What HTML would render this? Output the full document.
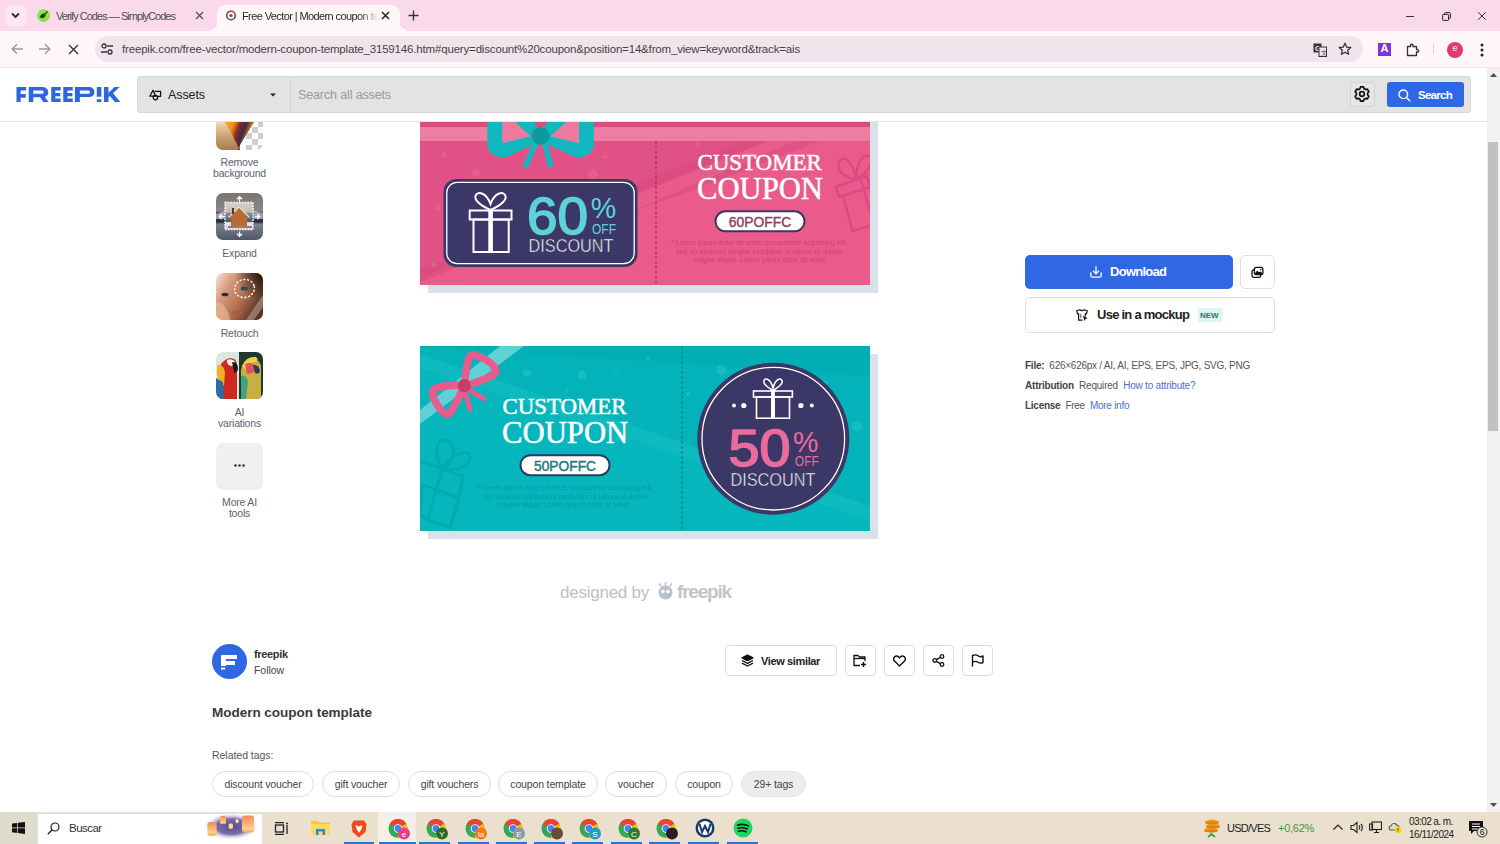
<!DOCTYPE html>
<html><head><meta charset="utf-8">
<style>
*{box-sizing:border-box;margin:0;padding:0}
html,body{width:1500px;height:844px;overflow:hidden;background:#fff;font-family:"Liberation Sans",sans-serif;color:#222}
.a{position:absolute;white-space:nowrap}
#tabs{position:absolute;left:0;top:0;width:1500px;height:31px;background:#fadaea}
#toolbar{position:absolute;left:0;top:31px;width:1500px;height:37px;background:#fff7f7;border-bottom:1px solid #f3e3ea}
#page{position:absolute;left:0;top:68px;width:1500px;height:744px;background:#fff;overflow:hidden}
#taskbar{position:absolute;left:0;top:812px;width:1500px;height:32px;background:#ebdfcd}
.side{position:absolute;left:216px;width:47px;height:47px;border-radius:7px;overflow:hidden}
.slab{position:absolute;left:199px;width:81px;text-align:center;font-size:10.5px;line-height:11px;color:#5b6270;letter-spacing:-0.2px}
.ib{position:absolute;width:31px;height:31px;border:1px solid #dcdcdc;border-radius:4px;background:#fff}
.tag{position:absolute;top:703px;height:26px;border:1px solid #dedede;border-radius:13px;font-size:10.5px;letter-spacing:-0.15px;color:#444;text-align:center;line-height:24px}
.tb{position:absolute;top:0;height:32px}
.ul{position:absolute;height:2px;background:#2a72d6}
</style></head><body>
<div id="tabs">
  <div class="a" style="left:5px;top:5px;width:22px;height:22px;border-radius:6px;background:#fce7f1"></div>
  <svg class="a" style="left:10px;top:12px" width="11" height="8" viewBox="0 0 11 8"><path d="M2 1.5 L5.5 5 L9 1.5" stroke="#2a2a2a" stroke-width="1.8" fill="none"/></svg>
  <div class="a" style="left:37px;top:9px;width:13px;height:13px;border-radius:50%;background:#8ee24c"></div>
  <svg class="a" style="left:37px;top:9px" width="13" height="13" viewBox="0 0 13 13"><path d="M3.5 8 Q5 4.5 7.5 5.5 Q9 7 5.5 8.5 Z M7 6 L10.5 2.5" stroke="#1a4a10" stroke-width="1.4" fill="#1a4a10"/></svg>
  <div id="t1" class="a" style="left:56px;top:10px;font-size:11px;color:#4d4d4d;letter-spacing:-0.973px">Verify Codes — SimplyCodes</div>
  <svg class="a" style="left:195px;top:11px" width="9" height="9" viewBox="0 0 9 9"><path d="M1 1L8 8M8 1L1 8" stroke="#555" stroke-width="1.3"/></svg>
  <div class="a" style="left:217px;top:5px;width:183px;height:27px;background:#fff7f7;border-radius:9px 9px 0 0"></div>
  <div class="a" style="left:211px;top:23px;width:6px;height:8px;background:radial-gradient(circle at 0 0,#fadaea 6px,#fff7f7 6.5px)"></div>
  <div class="a" style="left:400px;top:23px;width:6px;height:8px;background:radial-gradient(circle at 100% 0,#fadaea 6px,#fff7f7 6.5px)"></div>
  <svg class="a" style="left:225px;top:9px" width="12" height="12" viewBox="0 0 12 12"><circle cx="6" cy="6.5" r="4.3" stroke="#555" stroke-width="1.6" fill="none"/><path d="M6 2.2 A4.3 4.3 0 0 1 10.3 6.5" stroke="#e0506a" stroke-width="1.6" fill="none"/><circle cx="6" cy="6.5" r="1.6" fill="#555"/></svg>
  <div id="t2" class="a" style="left:242px;top:10px;font-size:11px;color:#2b2b2b;letter-spacing:-0.6px;width:136px;overflow:hidden;-webkit-mask-image:linear-gradient(90deg,#000 118px,transparent 136px)">Free Vector | Modern coupon template</div>
  <svg class="a" style="left:381px;top:11px" width="9" height="9" viewBox="0 0 9 9"><path d="M1 1L8 8M8 1L1 8" stroke="#222" stroke-width="1.5"/></svg>
  <svg class="a" style="left:408px;top:10px" width="11" height="11" viewBox="0 0 11 11"><path d="M5.5 0.5V10.5M0.5 5.5H10.5" stroke="#333" stroke-width="1.4"/></svg>
  <div class="a" style="left:1406px;top:15.5px;width:8px;height:1px;background:#333"></div>
  <svg class="a" style="left:1442px;top:11.5px" width="9" height="9" viewBox="0 0 9 9"><rect x="0.6" y="2.4" width="6" height="6" rx="0.8" stroke="#222" stroke-width="1" fill="none"/><path d="M2.4 2.2V1.6Q2.4 0.6 3.4 0.6H7.4Q8.4 0.6 8.4 1.6V5.6Q8.4 6.6 7.4 6.6H6.8" stroke="#222" stroke-width="1" fill="none"/></svg>
  <svg class="a" style="left:1478px;top:12px" width="8" height="8" viewBox="0 0 8 8"><path d="M0.3 0.3L7.7 7.7M7.7 0.3L0.3 7.7" stroke="#333" stroke-width="1"/></svg>
</div>
<div id="toolbar">
  <svg class="a" style="left:11px;top:12px" width="13" height="12" viewBox="0 0 13 12"><path d="M12 6H1.5M6 1.2L1.2 6L6 10.8" stroke="#9a9a9a" stroke-width="1.4" fill="none"/></svg>
  <svg class="a" style="left:38px;top:12px" width="13" height="12" viewBox="0 0 13 12"><path d="M1 6H11.5M7 1.2L11.8 6L7 10.8" stroke="#9a9a9a" stroke-width="1.4" fill="none"/></svg>
  <svg class="a" style="left:68px;top:13px" width="11" height="11" viewBox="0 0 11 11"><path d="M1 1L10 10M10 1L1 10" stroke="#333" stroke-width="1.4"/></svg>
  <div class="a" style="left:95px;top:5px;width:1268px;height:26px;background:#f2e4ec;border-radius:13px"></div>
  <svg class="a" style="left:100px;top:11px" width="14" height="14" viewBox="0 0 14 14"><circle cx="4" cy="4" r="2" stroke="#333" stroke-width="1.3" fill="none"/><path d="M7 4H13M1 10H7" stroke="#333" stroke-width="1.3"/><circle cx="10" cy="10" r="2" stroke="#333" stroke-width="1.3" fill="none"/></svg>
  <div id="url" class="a" style="left:122px;top:12px;font-size:11.5px;color:#444;letter-spacing:-0.17px">freepik.com/free-vector/modern-coupon-template_3159146.htm#query=discount%20coupon&amp;position=14&amp;from_view=keyword&amp;track=ais</div>
  <svg class="a" style="left:1313px;top:12px" width="14" height="14" viewBox="0 0 14 14"><rect x="0.5" y="0.5" width="8" height="9" fill="#333"/><text x="2" y="8" font-size="7" fill="#fff" font-family="Liberation Sans" font-weight="bold">G</text><rect x="6" y="4" width="7.5" height="9.5" stroke="#333" stroke-width="1" fill="#f2e4ec"/><text x="7.5" y="11.5" font-size="6" fill="#333" font-family="Liberation Sans">文</text></svg>
  <svg class="a" style="left:1338px;top:11px" width="14" height="14" viewBox="0 0 14 14"><path d="M7 1.3L8.7 5.1L12.8 5.5L9.7 8.2L10.6 12.3L7 10.2L3.4 12.3L4.3 8.2L1.2 5.5L5.3 5.1Z" stroke="#333" stroke-width="1.3" fill="none" stroke-linejoin="round"/></svg>
  <div class="a" style="left:1378px;top:12px;width:13px;height:13px;background:#7b33e0"></div>
  <div class="a" style="left:1378px;top:11px;width:13px;font-size:11px;font-weight:bold;color:#fff;text-align:center">A</div>
  <svg class="a" style="left:1406px;top:12px" width="14" height="14" viewBox="0 0 14 14"><path d="M1.5 3.5H4.5V2.2A1.3 1.3 0 0 1 7 2.2V3.5H10.5V6.5H11.8A1.3 1.3 0 0 1 11.8 9H10.5V12.5H1.5Z" stroke="#333" stroke-width="1.3" fill="none" stroke-linejoin="round"/></svg>
  <div class="a" style="left:1433px;top:13px;width:1px;height:10px;background:#f0c8d8"></div>
  <div class="a" style="left:1447px;top:11px;width:16px;height:16px;border-radius:50%;background:#e23a6a"></div>
  <div class="a" style="left:1447px;top:12px;width:16px;font-size:9px;color:#fff;text-align:center">e</div>
  <svg class="a" style="left:1480px;top:12px" width="4" height="14" viewBox="0 0 4 14"><circle cx="2" cy="2" r="1.5" fill="#222"/><circle cx="2" cy="7" r="1.5" fill="#222"/><circle cx="2" cy="12" r="1.5" fill="#222"/></svg>
</div>
<div id="page">
  <!-- coupon pink -->
  <svg class="a" style="left:420px;top:32px" width="458" height="193" viewBox="0 0 458 193">
    <rect x="8" y="8" width="450" height="185" fill="#dae1ea"/>
    <rect x="0" y="0" width="450" height="185" fill="#ea5a8a"/>
    <polygon points="0,0 450,0 450,22 260,95 0,185" fill="#e05285"/>
    <polygon points="0,178 0,185 40,185 420,22 395,22" fill="#e95c8c" opacity="0.9"/>
    <polygon points="0,170 0,182 395,22 370,22" fill="#d84a7e" opacity="0.6"/>
    <rect x="0" y="0" width="450" height="27" fill="#d84d7e"/>
    <rect x="0" y="27" width="450" height="14" fill="#ee7ca3"/>
    <g fill="#e26392" opacity="0.8"><circle cx="24" cy="55" r="2.5"/><circle cx="56" cy="73" r="4"/><circle cx="173" cy="75" r="5"/><circle cx="185" cy="57" r="2"/><circle cx="18" cy="107" r="3.5"/><circle cx="14" cy="165" r="2.5"/><circle cx="278" cy="44" r="2"/></g>
    <!-- bow -->
    <g stroke="#12b8c0" stroke-width="5.6" stroke-linecap="round"><path d="M115.4 44 L106 65"/><path d="M125 44 L130.4 65"/></g>
    <g fill="#12b8c0" stroke="#12b8c0" stroke-width="4" stroke-linejoin="round">
      <path d="M116 30 L111 20 L69.3 20 L69.3 44 Q70 55 85.5 55.3 L116 41Z"/>
      <path d="M125.2 30 L130.2 20 L171.9 20 L171.9 44 Q171.2 55 155.7 55.3 L125.2 41Z"/>
    </g>
    <g fill="#ef7aa0">
      <path d="M82.2 20 L93 20 L110.7 36.2 L82.2 43.2Z"/>
      <path d="M159 20 L148.2 20 L130.5 36.2 L159 43.2Z"/>
    </g>
    <circle cx="120.6" cy="35.8" r="9" fill="#0c9a9e"/>
    <!-- navy box -->
    <rect x="23.5" y="79" width="194" height="88" rx="13" fill="#3b3766"/>
    <rect x="26.8" y="82.3" width="187.4" height="81.4" rx="10.5" fill="none" stroke="#fff" stroke-width="1.3"/>
    <g fill="none" stroke="#fff" stroke-width="2">
      <rect x="49.7" y="110.5" width="41.8" height="9"/>
      <rect x="53.5" y="119.5" width="35.2" height="32.5"/>
      <path d="M70.5 110 C62 106 54 101 55.5 96 C57 91 66 91.5 70.5 104 C75 91.5 84 91 85.5 96 C87 101 79 106 70.5 110Z"/>
    </g>
    <rect x="68.3" y="110" width="4.6" height="42" fill="#fff"/>
    <text x="107" y="134.4" font-family="Liberation Sans" font-size="52" fill="#5dd3d6" stroke="#5dd3d6" stroke-width="1.6" textLength="61" lengthAdjust="spacingAndGlyphs">60</text>
    <text x="170.8" y="118" font-family="Liberation Sans" font-size="30" fill="#5dd3d6" textLength="25.5" lengthAdjust="spacingAndGlyphs">%</text>
    <text x="172" y="134.4" font-family="Liberation Sans" font-size="14.4" fill="#5dd3d6" textLength="24" lengthAdjust="spacingAndGlyphs">OFF</text>
    <text x="108.5" y="152" font-family="Liberation Sans" font-size="18.5" fill="#fff" stroke="#3b3766" stroke-width="0.5" textLength="85" lengthAdjust="spacingAndGlyphs">DISCOUNT</text>
    <line x1="236" y1="41" x2="236" y2="185" stroke="#a8386a" stroke-width="1.3" stroke-dasharray="3 2"/>
    <!-- right -->
    <clipPath id="cp1"><rect width="450" height="185"/></clipPath>
    <g fill="none" stroke="#d94b7f" stroke-width="2.6" stroke-linejoin="round" opacity="0.9" clip-path="url(#cp1)">
      <path d="M415.5 86.8 L447 76.2 L450 87.5 L419 96.7 Z"/>
      <path d="M423 95.5 L432.6 131 L452 125"/>
      <path d="M441 80 L452 118"/>
      <path d="M436 79 C424 78 416 70 419 62 C422 55 432 58 436 79 C436 66 442 53 449 56 C455 60 448 74 436 79"/>
    </g>
    <text x="277.4" y="69.8" font-family="Liberation Serif" font-size="23" fill="#fff" stroke="#fff" stroke-width="0.5" textLength="124.5" lengthAdjust="spacingAndGlyphs">CUSTOMER</text>
    <text x="277" y="99.4" font-family="Liberation Serif" font-size="31.5" fill="#fff" stroke="#fff" stroke-width="0.5" textLength="126" lengthAdjust="spacingAndGlyphs">COUPON</text>
    <rect x="295.5" y="111.3" width="89" height="20" rx="10" fill="#fff" stroke="#3b3766" stroke-width="2"/>
    <text x="308.7" y="127.2" font-family="Liberation Sans" font-size="14.2" fill="#8c3d62" stroke="#8c3d62" stroke-width="0.4" textLength="62.5" lengthAdjust="spacingAndGlyphs">60POFFC</text>
    <g font-family="Liberation Sans" font-size="8" fill="#c23c70" opacity="0.8">
      <text x="251" y="145" textLength="177" lengthAdjust="spacingAndGlyphs">* Lorem ipsum dolor sit amet, consectetur adipiscing elit,</text>
      <text x="256" y="153.5" textLength="166" lengthAdjust="spacingAndGlyphs">sed do eiusmod tempor incididunt ut labore et dolore</text>
      <text x="273" y="162" textLength="134" lengthAdjust="spacingAndGlyphs">magna aliqua. Lorem ipsum dolor sit amet.</text>
    </g>
  </svg>
  <!-- coupon teal -->
  <svg class="a" style="left:420px;top:278px" width="458" height="193" viewBox="0 0 458 193">
    <rect x="8" y="8" width="450" height="185" fill="#dae1ea"/>
    <rect x="0" y="0" width="450" height="185" fill="#03b3b9"/>
    <polygon points="0,0 450,0 450,30 0,0" fill="#00aeb4"/>
    <polygon points="0,8 0,22 450,175 450,160" fill="#12bcc2" opacity="0.8"/>
    <polygon points="0,22 0,185 450,185 450,175" fill="#05b6bc"/>
    <g fill="#1ec0c6" opacity="0.7"><circle cx="107" cy="27" r="4"/><circle cx="162" cy="29" r="4.5"/><circle cx="147" cy="45" r="2"/><circle cx="196" cy="28" r="1.5"/><circle cx="228" cy="13" r="2"/><circle cx="268" cy="48" r="2"/><circle cx="301" cy="24" r="5"/><circle cx="348" cy="63" r="6"/><circle cx="437" cy="80" r="5"/><circle cx="405" cy="37" r="3"/><circle cx="373" cy="30" r="3"/><circle cx="435" cy="158" r="2.5"/></g>
    <!-- faint gift -->
    <g fill="none" stroke="#03a2a8" stroke-width="3" opacity="0.55">
      <path d="M0 115 L43 130 L39 152 L0 138"/>
      <path d="M2 138 L0 170 L30 182 L39 152"/>
      <path d="M22 123 C10 100 22 88 30 97 C38 106 30 120 22 123 C30 110 50 100 50 112 C50 122 35 124 22 123 L8 173"/>
    </g>
    <polygon points="0,64 0,78 104,0 80,0" fill="#5fd0d4"/>
    <!-- bow -->
    <g fill="none" stroke="#ea5a8c" stroke-width="7.4" stroke-linejoin="round" stroke-linecap="round">
      <path d="M44.4 39.7 Q46 20 49 12 Q51 8 56 9.5 Q70 14 75 22 Q77 26 73 29 Q60 36 44.4 39.7Z"/>
      <path d="M44.4 39.7 Q28 38 16 42 Q11 45 13 50 Q17 61 24 67 Q28 70 31 66 Q39 52 44.4 39.7Z"/>
    </g>
    <g stroke="#ea5a8c" stroke-width="5" stroke-linecap="round"><path d="M48 43 L64 53"/><path d="M45 45 L50 63"/></g>
    <circle cx="44.4" cy="39.7" r="6.6" fill="#c23f6c"/>
    <text x="82.5" y="68" font-family="Liberation Serif" font-size="23" fill="#fff" stroke="#fff" stroke-width="0.5" textLength="124" lengthAdjust="spacingAndGlyphs">CUSTOMER</text>
    <text x="82" y="97.3" font-family="Liberation Serif" font-size="31.5" fill="#fff" stroke="#fff" stroke-width="0.5" textLength="126.3" lengthAdjust="spacingAndGlyphs">COUPON</text>
    <rect x="100.5" y="109.2" width="89" height="20" rx="10" fill="#fff" stroke="#2d3a60" stroke-width="2"/>
    <text x="114" y="125.2" font-family="Liberation Sans" font-size="14.2" fill="#2a7a80" stroke="#2a7a80" stroke-width="0.5" textLength="62" lengthAdjust="spacingAndGlyphs">50POFFC</text>
    <g font-family="Liberation Sans" font-size="8" fill="#078c93" opacity="0.65">
      <text x="57" y="144" textLength="176" lengthAdjust="spacingAndGlyphs">* Lorem ipsum dolor sit amet, consectetur adipiscing elit,</text>
      <text x="62.5" y="152.5" textLength="165.5" lengthAdjust="spacingAndGlyphs">sed do eiusmod tempor incididunt ut labore et dolore</text>
      <text x="77.6" y="161" textLength="133.5" lengthAdjust="spacingAndGlyphs">magna aliqua. Lorem ipsum dolor sit amet.</text>
    </g>
    <line x1="262" y1="0" x2="262" y2="185" stroke="#137f88" stroke-width="1.3" stroke-dasharray="3 2"/>
    <circle cx="353.3" cy="92.7" r="76" fill="#3b3766"/>
    <circle cx="353.3" cy="92.7" r="71.3" fill="none" stroke="#fff" stroke-width="1.3"/>
    <g fill="none" stroke="#fff" stroke-width="1.6">
      <rect x="333.5" y="45" width="38.9" height="6"/>
      <rect x="336.5" y="51" width="33" height="21.2"/>
      <path d="M353 44.5 C347 41 342.5 37.5 344 34.5 C345.5 31.5 350.5 32.5 353 42 C355.5 32.5 360.5 31.5 362 34.5 C363.5 37.5 359 41 353 44.5Z"/>
    </g>
    <rect x="351" y="44" width="4" height="28.2" fill="#fff"/>
    <g fill="#fff"><circle cx="314" cy="59.5" r="2"/><circle cx="323.8" cy="59.5" r="2.6"/><circle cx="380.9" cy="59.5" r="2.6"/><circle cx="391.8" cy="59.5" r="2"/></g>
    <text x="308.5" y="120.3" font-family="Liberation Sans" font-size="52" fill="#ea6b9c" stroke="#ea6b9c" stroke-width="1.6" textLength="62" lengthAdjust="spacingAndGlyphs">50</text>
    <text x="373" y="105.7" font-family="Liberation Sans" font-size="30" fill="#ea6b9c" textLength="25.5" lengthAdjust="spacingAndGlyphs">%</text>
    <text x="374.8" y="120.3" font-family="Liberation Sans" font-size="14.4" fill="#ea6b9c" textLength="24" lengthAdjust="spacingAndGlyphs">OFF</text>
    <text x="310.4" y="139.7" font-family="Liberation Sans" font-size="18" fill="#fff" stroke="#3b3766" stroke-width="0.5" textLength="85" lengthAdjust="spacingAndGlyphs">DISCOUNT</text>
  </svg>
  <!-- watermark -->
  <div id="wm1" class="a" style="left:560px;top:515px;font-size:17px;color:#b9c1c9;letter-spacing:-0.244px">designed by</div>
  <svg class="a" style="left:655px;top:514px" width="21" height="18" viewBox="0 0 21 18"><g fill="#b9c1c9"><circle cx="10.5" cy="10.5" r="7"/><path d="M10.5 0V4M4 1.5L6.5 4.5M17 1.5L14.5 4.5" stroke="#b9c1c9" stroke-width="1.5"/></g><circle cx="8" cy="9.5" r="1.8" fill="#fff"/><circle cx="13" cy="9.5" r="1.8" fill="#fff"/></svg>
  <div id="wm2" class="a" style="left:677px;top:513px;font-size:19px;font-weight:bold;color:#bdc5cc;letter-spacing:-1.188px">freepik</div>
  <!-- header -->
  <div class="a" style="left:0;top:0;width:1487px;height:54px;background:#fff;border-bottom:1px solid #e6e6e6"></div>
  <svg class="a" style="left:15px;top:19px" width="106" height="15" viewBox="0 0 106 15.2">
    <g fill="#2e65e0">
      <path d="M0.8 0H10.6V3.6H5V7.2H10.2V10.8H5V15.2H0.8Z"/>
      <path d="M13.2 0H26C30.5 0 33 2.1 33 5.2C33 7.6 31.6 9.2 29.4 9.9L33.4 15.2H28L24.6 10.4H17.8V15.2H13.2ZM17.8 3.6V6.8H26.2C27.6 6.8 28.3 6.2 28.3 5.2C28.3 4.2 27.6 3.6 26.2 3.6Z"/>
      <path d="M36 0H45.6V3.6H40.2V6H45.2V9.4H40.2V11.6H45.6V15.2H36Z"/>
      <path d="M48.2 0H57.8V3.6H52.4V6H57.4V9.4H52.4V11.6H57.8V15.2H48.2Z"/>
      <path d="M60 0H73.8C77.6 0 79.8 2.1 79.8 5.1C79.8 8.1 77.6 10.2 73.8 10.2H65V15.2H60ZM65 3.6V6.8H73.4C74.6 6.8 75.2 6.2 75.2 5.2C75.2 4.2 74.6 3.6 73.4 3.6Z"/>
      <path d="M82.2 0H86.8V10H82.2Z M82.2 12.4H86.8V15.2H82.2Z"/>
      <path d="M89.4 0H94V5.8L100.2 0H105.4L98.6 6.3L106 15.2H100.4L95.4 9.1L94 10.4V15.2H89.4Z"/>
    </g>
  </svg>
  <div class="a" style="left:137px;top:8px;width:1334px;height:37px;background:#e3e3e3;border:1px solid #d8d8d8;border-radius:3px"></div>
  <svg class="a" style="left:149px;top:20px" width="13" height="13" viewBox="0 0 13 13"><g stroke="#111" stroke-width="1.3" fill="none" stroke-linejoin="round"><path d="M4 2.3L0.8 8.2H6.8Z"/><path d="M5.6 3.4H11.6V8.4H8.6"/><circle cx="6.4" cy="9.6" r="2.2"/></g></svg>
  <div id="assets" class="a" style="left:168px;top:20px;font-size:12.5px;color:#222;letter-spacing:-0.086px">Assets</div>
  <svg class="a" style="left:270px;top:25px" width="6" height="4" viewBox="0 0 6 4"><path d="M0 0.5H6L3 3.5Z" fill="#222"/></svg>
  <div class="a" style="left:290px;top:9px;width:1px;height:35px;background:#d4d4d4"></div>
  <div id="sall" class="a" style="left:298px;top:20px;font-size:12.5px;color:#9a9a9a;letter-spacing:-0.129px">Search all assets</div>
  <div class="a" style="left:1350px;top:14px;width:25px;height:25px;border:1px solid #d3d3d3;border-radius:3px;background:#e6e6e6"></div>
  <svg class="a" style="left:1354px;top:18px" width="16" height="16" viewBox="0 0 16 16"><path d="M5.90 2.81 L6.50 0.96 L9.50 0.96 L10.10 2.81 L11.45 3.59 L13.35 3.18 L14.85 5.78 L13.55 7.22 L13.55 8.78 L14.85 10.22 L13.35 12.82 L11.45 12.41 L10.10 13.19 L9.50 15.04 L6.50 15.04 L5.90 13.19 L4.55 12.41 L2.65 12.82 L1.15 10.22 L2.45 8.78 L2.45 7.22 L1.15 5.78 L2.65 3.18 L4.55 3.59Z" stroke="#111" stroke-width="1.7" fill="none" stroke-linejoin="round"/><circle cx="8" cy="8" r="2.3" stroke="#111" stroke-width="1.7" fill="none"/></svg>
  <div class="a" style="left:1387px;top:14px;width:77px;height:25px;background:#2f67e5;border-radius:3px"></div>
  <svg class="a" style="left:1398px;top:21px" width="13" height="13" viewBox="0 0 13 13"><circle cx="5.3" cy="5.3" r="4.3" stroke="#fff" stroke-width="1.4" fill="none"/><path d="M8.5 8.5L12.2 12.2" stroke="#fff" stroke-width="1.4"/></svg>
  <div id="sbtn" class="a" style="left:1418px;top:21px;font-size:11.5px;font-weight:bold;color:#fff;letter-spacing:-0.727px">Search</div>
  <!-- sidebar -->
  <svg class="a" style="left:216px;top:54px" width="47" height="28" viewBox="0 0 47 28">
    <defs><linearGradient id="sky" x1="0" y1="0" x2="0" y2="1"><stop offset="0" stop-color="#eadcb8"/><stop offset="0.45" stop-color="#d0a878"/><stop offset="1" stop-color="#a87850"/></linearGradient>
    <linearGradient id="bal" x1="0" y1="0" x2="1" y2="0.3"><stop offset="0" stop-color="#f0b030"/><stop offset="0.3" stop-color="#e89020"/><stop offset="0.5" stop-color="#8a2a20"/><stop offset="0.7" stop-color="#3a2a50"/><stop offset="0.85" stop-color="#c06020"/><stop offset="1" stop-color="#e07a20"/></linearGradient>
    <clipPath id="rb"><path d="M0 0H47V21A7 7 0 0 1 40 28H7A7 7 0 0 1 0 21Z"/></clipPath></defs>
    <g clip-path="url(#rb)">
      <rect width="47" height="28" fill="#fff"/>
      <g fill="#cfcfcf"><rect x="42" y="0" width="6" height="5"/><rect x="36" y="5" width="6" height="6"/><rect x="30" y="11" width="6" height="6"/><rect x="42" y="11" width="6" height="6"/><rect x="36" y="17" width="6" height="6"/><rect x="30" y="23" width="6" height="6"/><rect x="42" y="23" width="6" height="6"/></g>
      <path d="M0 0H24V28H0Z" fill="url(#sky)"/>
      <path d="M9 0H38L28 16L24 23L22 28H24Z" fill="url(#bal)"/>
      <path d="M9 0H38L24 22.5Z" fill="url(#bal)"/>
    </g>
  </svg>
  <div id="l1" class="slab" style="top:89px">Remove<br>background</div>
  <svg class="a" style="left:216px;top:125px" width="47" height="47" viewBox="0 0 47 47">
    <defs><clipPath id="rr2"><rect width="47" height="47" rx="7"/></clipPath>
    <linearGradient id="eg" x1="0" y1="0" x2="0" y2="1"><stop offset="0" stop-color="#7a7674"/><stop offset="0.38" stop-color="#8c8684"/><stop offset="0.42" stop-color="#404a58"/><stop offset="0.62" stop-color="#26303c"/><stop offset="0.66" stop-color="#7c8290"/><stop offset="1" stop-color="#4e5666"/></linearGradient>
    <linearGradient id="fg" x1="0" y1="0" x2="0" y2="1"><stop offset="0" stop-color="#d4d0cc"/><stop offset="0.35" stop-color="#c8bcb8"/><stop offset="0.4" stop-color="#8090a0"/><stop offset="0.7" stop-color="#4a5868"/><stop offset="0.75" stop-color="#e8e8ee"/><stop offset="1" stop-color="#d0d0d8"/></linearGradient></defs>
    <g clip-path="url(#rr2)">
      <rect width="47" height="47" fill="url(#eg)"/>
      <path d="M0 21L8 18L14 21L20 17L28 21L36 17L47 20V26H0Z" fill="#d8dce4" opacity="0.6"/>
      <rect x="9" y="9.5" width="28" height="27" fill="url(#fg)"/>
      <rect x="9" y="9.5" width="28" height="27" fill="none" stroke="#fff" stroke-width="1.4" stroke-dasharray="1.6 1.2"/>
      <path d="M13 24L23 14L33 24H31V33H15V24Z" fill="#b86a30"/>
      <path d="M12.5 24.5L23 14L33.5 24.5" stroke="#f0e0d0" stroke-width="1.2" fill="none"/>
      <rect x="16" y="15" width="2" height="6" fill="#4a3a30"/>
      <rect x="12" y="33" width="24" height="2" fill="#6a4030" opacity="0.6"/>
    </g>
    <g stroke="#fff" stroke-width="1.3" fill="none"><path d="M23.5 8.5V4M21 6.2L23.5 3.7L26 6.2"/><path d="M23.5 38.5V43M21 40.8L23.5 43.3L26 40.8"/><path d="M8 23.5H3.5M5.7 21L3.2 23.5L5.7 26"/><path d="M39 23.5H43.5M41.3 21L43.8 23.5L41.3 26"/></g>
  </svg>
  <div id="l2" class="slab" style="top:180px">Expand</div>
  <svg class="a" style="left:216px;top:205px" width="47" height="47" viewBox="0 0 47 47">
    <defs><clipPath id="rr3"><rect width="47" height="47" rx="7"/></clipPath>
    <linearGradient id="sk" x1="0" y1="0" x2="1" y2="0.6"><stop offset="0" stop-color="#f8e4dc"/><stop offset="0.3" stop-color="#d89c80"/><stop offset="0.65" stop-color="#b07050"/><stop offset="1" stop-color="#583226"/></linearGradient>
    <radialGradient id="hair" cx="1" cy="0" r="0.6"><stop offset="0" stop-color="#1a0e08"/><stop offset="1" stop-color="#1a0e08" stop-opacity="0"/></radialGradient></defs>
    <g clip-path="url(#rr3)">
      <rect width="47" height="47" fill="url(#sk)"/>
      <rect width="47" height="47" fill="url(#hair)"/>
      <path d="M0 30 Q10 28 14 47 H0Z" fill="#e8b890" opacity="0.7"/>
      <path d="M30 47 L47 22 V34 L38 47Z" fill="#e0c0a8" opacity="0.45"/>
      <ellipse cx="9" cy="21.5" rx="3.5" ry="1.8" fill="#2a3038"/>
      <ellipse cx="28.5" cy="15.5" rx="3.8" ry="2" fill="#3a4850"/>
      <ellipse cx="21" cy="40" rx="6" ry="2.5" fill="#b05848" opacity="0.8"/>
      <ellipse cx="28.5" cy="15.5" rx="10" ry="9" fill="none" stroke="#fff" stroke-width="1.4" stroke-dasharray="2.2 1.6" transform="rotate(-15 28.5 15.5)"/>
    </g>
  </svg>
  <div id="l3" class="slab" style="top:260px">Retouch</div>
  <svg class="a" style="left:216px;top:284px" width="47" height="47" viewBox="0 0 47 47">
    <defs><clipPath id="rr4"><rect width="47" height="47" rx="7"/></clipPath></defs>
    <g clip-path="url(#rr4)">
      <rect width="23" height="47" fill="#d8e8dc"/>
      <rect x="23" width="24" height="47" fill="#1e3a30"/>
      <path d="M3 47 V20 Q4 8 14 6 Q20 6 21 12 V47Z" fill="#d02820"/>
      <path d="M1 14 Q6 10 9 20 L8 34 Q2 30 1 22Z" fill="#f0b020"/>
      <path d="M0 26 L7 30 L8 47 H0Z" fill="#2a70a0"/>
      <path d="M11 8 Q17 6 19 10 L16 14 Q12 14 11 10Z" fill="#f0f0f0"/>
      <path d="M16 10 Q22 10 22 17 Q21 21 18 21 L17 14Z" fill="#1a1a1a"/>
      <path d="M25 47 V18 Q27 8 35 7 Q43 6 45 14 V47Z" fill="#c8b040"/>
      <path d="M26 14 Q30 4 40 5 Q44 8 38 10 Q33 11 30 18Z" fill="#f0d040"/>
      <path d="M29 12 Q37 9 40 16 Q38 22 31 22Z" fill="#e05060"/>
      <path d="M37 13 Q43 12 44 19 Q43 23 39 21Z" fill="#2a3a60"/>
      <path d="M25 24 Q30 22 32 30 L30 47 H25Z" fill="#40a080"/>
    </g>
  </svg>
  <div id="l4" class="slab" style="top:339px">AI<br>variations</div>
  <div class="side" style="top:375px;background:#f0f0f0"></div>
  <svg class="a" style="left:234px;top:396px" width="11" height="3" viewBox="0 0 11 3"><circle cx="1.5" cy="1.5" r="1.3" fill="#333"/><circle cx="5.5" cy="1.5" r="1.3" fill="#333"/><circle cx="9.5" cy="1.5" r="1.3" fill="#333"/></svg>
  <div id="l5" class="slab" style="top:429px">More AI<br>tools</div>
  <!-- right panel -->
  <div class="a" style="left:1025px;top:187px;width:208px;height:34px;background:#2f67e5;border-radius:5px"></div>
  <svg class="a" style="left:1090px;top:198px" width="12" height="12" viewBox="0 0 12 12"><g stroke="#fff" stroke-width="1.3" fill="none" stroke-linecap="round" stroke-linejoin="round"><path d="M6 0.7V7.6M3.4 5.1L6 7.7L8.6 5.1"/><path d="M0.8 6.8V9.4Q0.8 11.2 2.6 11.2H9.4Q11.2 11.2 11.2 9.4V6.8"/></g></svg>
  <div id="dl" class="a" style="left:1110px;top:196px;font-size:13px;font-weight:bold;color:#fff;letter-spacing:-0.726px">Download</div>
  <div class="a" style="left:1240px;top:187px;width:35px;height:34px;border:1px solid #e0e0e0;border-radius:5px"></div>
  <svg class="a" style="left:1251px;top:198px" width="13" height="13" viewBox="0 0 13 13"><rect x="1" y="4" width="8.6" height="7.3" rx="1.6" fill="#fff" stroke="#111" stroke-width="1.3"/><rect x="3.4" y="1.3" width="8.5" height="7.3" rx="1.6" fill="#fff" stroke="#111" stroke-width="1.3"/><path d="M4 8.6V7.2L6.2 4.6L8 6.3L9.4 5.4L11.9 7.4V8.6Z" fill="#111"/><circle cx="9.8" cy="3.6" r="0.8" fill="#111"/></svg>
  <div class="a" style="left:1025px;top:229px;width:250px;height:36px;border:1px solid #dedede;border-radius:5px"></div>
  <svg class="a" style="left:1076px;top:241px" width="12" height="12" viewBox="0 0 12 12"><g stroke="#111" stroke-width="1.2" fill="none" stroke-linejoin="round"><path d="M3.6 0.8L0.7 1.8L1.6 5L2.6 4.7V11.2H6.5M8.4 0.8L11.3 1.8L10.4 5L9.4 4.7V7.5M3.6 0.8Q6 2.6 8.4 0.8"/><path d="M4 6H5.5M4 8H5.5"/></g><path d="M6.8 6.6L11.6 9.2L9.5 9.9L8.6 12Z" fill="#111"/></svg>
  <div id="mk" class="a" style="left:1097px;top:239px;font-size:13px;font-weight:bold;color:#222;letter-spacing:-0.741px">Use in a mockup</div>
  <div class="a" style="left:1198px;top:240px;width:25px;height:14px;background:#dff5f2;border-radius:2px"></div>
  <div id="nw" class="a" style="left:1200px;top:243px;font-size:8px;font-weight:bold;color:#1f7a68">NEW</div>
  <div id="f1" class="a" style="left:1025px;top:292px;font-size:10px;color:#555;letter-spacing:-0.253px"><b style="color:#444">File:</b>&nbsp; 626×626px / AI, AI, EPS, EPS, JPG, SVG, PNG</div>
  <div id="f2" class="a" style="left:1025px;top:312px;font-size:10px;color:#555;letter-spacing:-0.203px"><b style="color:#444">Attribution</b>&nbsp; Required&nbsp; <span style="color:#4a6fd8">How to attribute?</span></div>
  <div id="f3" class="a" style="left:1025px;top:332px;font-size:10px;color:#555;letter-spacing:-0.268px"><b style="color:#444">License</b>&nbsp; Free&nbsp; <span style="color:#4a6fd8">More info</span></div>
  <!-- author -->
  <div class="a" style="left:212px;top:576px;width:35px;height:35px;border-radius:50%;background:#2f67e5"></div>
  <svg class="a" style="left:221px;top:587px" width="16" height="15" viewBox="0 0 16 15"><path d="M0 0H16V4H5V6H14V10H5V11H0Z" fill="#fff"/><rect x="0" y="12.5" width="4" height="2" fill="#fff"/></svg>
  <div id="au" class="a" style="left:254px;top:580px;font-size:11px;font-weight:bold;color:#333;letter-spacing:-0.34px">freepik</div>
  <div id="fo" class="a" style="left:254px;top:596px;font-size:10.5px;color:#444;letter-spacing:-0.041px">Follow</div>
  <div class="ib" style="left:725px;top:577px;width:112px;height:31px"></div>
  <svg class="a" style="left:741px;top:586px" width="13" height="13" viewBox="0 0 13 13"><g stroke="#111" stroke-width="1.3" fill="none" stroke-linejoin="round"><path d="M6.5 1L12 3.8L6.5 6.6L1 3.8Z" fill="#111"/><path d="M1 6.5L6.5 9.3L12 6.5"/><path d="M1 9.2L6.5 12L12 9.2"/></g></svg>
  <div id="vs" class="a" style="left:761px;top:587px;font-size:11px;font-weight:bold;color:#222;letter-spacing:-0.366px">View similar</div>
  <div class="ib" style="left:845px;top:577px"></div>
  <svg class="a" style="left:853px;top:586px" width="14" height="13" viewBox="0 0 14 13"><g stroke="#111" stroke-width="1.3" fill="none" stroke-linejoin="round"><path d="M7 11.5H1V1.5H5L6.5 3H12V7"/><path d="M1 4.5H12"/></g><path d="M10.5 8V13M8 10.5H13" stroke="#111" stroke-width="1.5"/></svg>
  <div class="ib" style="left:884px;top:577px"></div>
  <svg class="a" style="left:893px;top:587px" width="13" height="12" viewBox="0 0 13 12"><path d="M6.5 11L1.5 6C0 4.5 0.5 1.2 3.3 1C5 0.9 6 2 6.5 3C7 2 8 0.9 9.7 1C12.5 1.2 13 4.5 11.5 6Z" stroke="#111" stroke-width="1.4" fill="none" stroke-linejoin="round"/></svg>
  <div class="ib" style="left:923px;top:577px"></div>
  <svg class="a" style="left:932px;top:586px" width="13" height="13" viewBox="0 0 13 13"><g stroke="#111" stroke-width="1.3" fill="none"><circle cx="10" cy="2.5" r="1.8"/><circle cx="2.8" cy="6.5" r="1.8"/><circle cx="10" cy="10.5" r="1.8"/><path d="M4.4 5.6L8.4 3.4M4.4 7.4L8.4 9.6"/></g></svg>
  <div class="ib" style="left:962px;top:577px"></div>
  <svg class="a" style="left:971px;top:586px" width="13" height="13" viewBox="0 0 13 13"><path d="M1.5 12.5V1.5C4 0.5 6 1 7 1.8C8 2.6 10 3 12 2V8.5C10 9.5 8 9 7 8.2C6 7.4 4 7 1.5 8" stroke="#111" stroke-width="1.4" fill="none" stroke-linejoin="round"/></svg>
  <div id="ttl" class="a" style="left:212px;top:637px;font-size:13.5px;font-weight:bold;color:#3a3a3a;letter-spacing:-0.023px">Modern coupon template</div>
  <div id="rt" class="a" style="left:212px;top:681px;font-size:10.5px;color:#555;letter-spacing:-0.037px">Related tags:</div>
  <div class="tag" style="left:212px;width:102px">discount voucher</div>
  <div class="tag" style="left:322px;width:78px">gift voucher</div>
  <div class="tag" style="left:408px;width:83px">gift vouchers</div>
  <div class="tag" style="left:498px;width:100px">coupon template</div>
  <div class="tag" style="left:605px;width:62px">voucher</div>
  <div class="tag" style="left:675px;width:58px">coupon</div>
  <div class="tag" style="left:741px;width:65px;background:#ededed;border-color:#e6e6e6">29+ tags</div>
  <!-- scrollbar -->
  <div class="a" style="left:1487px;top:0;width:13px;height:744px;background:#f1f1f1"></div>
  <svg class="a" style="left:1490px;top:5px" width="7" height="4" viewBox="0 0 7 4"><path d="M0 4H7L3.5 0Z" fill="#505050"/></svg>
  <div class="a" style="left:1488px;top:74px;width:10px;height:289px;background:#c1c1c1"></div>
  <svg class="a" style="left:1490px;top:735px" width="7" height="4" viewBox="0 0 7 4"><path d="M0 0H7L3.5 4Z" fill="#505050"/></svg>
</div>
<div id="taskbar">
  <div class="a" style="left:0;top:0;width:38px;height:32px;background:#dfdbcd"></div>
  <svg class="a" style="left:12px;top:10px" width="13" height="12" viewBox="0 0 13 12"><path d="M0 1.6L5.3 0.9V5.6H0ZM6 0.8L13 0V5.6H6ZM0 6.3H5.3V11L0 10.3ZM6 6.3H13V12L6 11.1Z" fill="#111"/></svg>
  <div class="a" style="left:38px;top:1px;width:224px;height:31px;background:#fff;border-top:1px solid #dcdcdc"></div>
  <svg class="a" style="left:47px;top:10px" width="13" height="13" viewBox="0 0 13 13"><circle cx="8" cy="5" r="4" stroke="#222" stroke-width="1.2" fill="none"/><path d="M5.2 7.8L0.8 12.2" stroke="#222" stroke-width="1.3"/></svg>
  <div id="bus" class="a" style="left:69px;top:10px;font-size:11.5px;color:#333;letter-spacing:-0.534px">Buscar</div>
  <svg class="a" style="left:200px;top:1px" width="62" height="31" viewBox="0 0 62 31">
    <defs><radialGradient id="lg" cx="0.5" cy="0.5" r="0.5"><stop offset="0" stop-color="#5a4a8a"/><stop offset="0.55" stop-color="#7a6aa8"/><stop offset="1" stop-color="#fff" stop-opacity="0"/></radialGradient>
    <linearGradient id="ln" x1="0" y1="0" x2="0" y2="1"><stop offset="0" stop-color="#f48a5a"/><stop offset="0.8" stop-color="#ffd08a"/><stop offset="1" stop-color="#f0a050"/></linearGradient></defs>
    <ellipse cx="31.5" cy="13.5" rx="28" ry="14" fill="url(#lg)"/>
    <rect x="7.4" y="9" width="9.2" height="13.7" rx="2.5" fill="url(#ln)"/>
    <rect x="20" y="3" width="6" height="8" rx="1.5" fill="url(#ln)"/>
    <rect x="28.7" y="10.6" width="4.2" height="5.1" rx="1.2" fill="#ffd8a0"/>
    <rect x="35.7" y="6.3" width="2.8" height="3.7" rx="1" fill="#ffe0c0"/>
    <rect x="42" y="2.6" width="12" height="16.8" rx="3" fill="url(#ln)"/>
  </svg>
  <svg class="a" style="left:274px;top:10px" width="15" height="13" viewBox="0 0 15 13"><g fill="none" stroke="#222" stroke-width="1.3"><path d="M1 0.7H10M1 12.3H10"/><rect x="1.5" y="3" width="8" height="7"/><path d="M13 3V12"/></g><circle cx="13" cy="1.5" r="1" fill="#222"/></svg>
  <svg class="a" style="left:311px;top:7px" width="19" height="16" viewBox="0 0 19 16"><path d="M0 2H7L8.5 3.5H19V16H0Z" fill="#f5c842"/><path d="M0 5H19V16H0Z" fill="#fcd96a"/><path d="M5 16V10H14V16H11.5V12.5H7.5V16Z" fill="#2a8ad8"/></svg>
  <svg class="a" style="left:351px;top:8px" width="16" height="18" viewBox="0 0 16 18"><path d="M3 0.5H13L15.5 4L14.5 12L8 17.5L1.5 12L0.5 4Z" fill="#f04a1a"/><path d="M4.5 5L8 6.5L11.5 5L10.5 9L8 13L5.5 9Z" fill="#fff"/></svg>
  <div class="a" style="left:378px;top:0;width:38px;height:32px;background:#f5efe8"></div>
  <div class="ul" style="left:344px;top:30px;width:30px"></div>
  <div class="ul" style="left:379px;top:30px;width:37px"></div>
  <svg class="a" style="left:388px;top:6px" width="24" height="22" viewBox="0 0 24 22"><circle cx="10" cy="10.5" r="9.5" fill="#34a853"/><path d="M10 10.5L1.8 5.75A9.5 9.5 0 0 1 18.2 5.75Z" fill="#ea4335"/><path d="M10 10.5L18.2 5.75A9.5 9.5 0 0 1 10 20Z" fill="#fbbc04"/><circle cx="10" cy="10.5" r="4.3" fill="#fff"/><circle cx="10" cy="10.5" r="3.4" fill="#4285f4"/><circle cx="16" cy="15.5" r="6" fill="#e43f8a"/><text x="16" y="18.5" font-size="8" fill="#fff" font-family="Liberation Sans" text-anchor="middle">e</text></svg>
  <svg class="a" style="left:426px;top:6px" width="24" height="22" viewBox="0 0 24 22"><circle cx="10" cy="10.5" r="9.5" fill="#34a853"/><path d="M10 10.5L1.8 5.75A9.5 9.5 0 0 1 18.2 5.75Z" fill="#ea4335"/><path d="M10 10.5L18.2 5.75A9.5 9.5 0 0 1 10 20Z" fill="#fbbc04"/><circle cx="10" cy="10.5" r="4.3" fill="#fff"/><circle cx="10" cy="10.5" r="3.4" fill="#4285f4"/><circle cx="16" cy="15.5" r="6" fill="#2d6a2a"/><text x="16" y="18.5" font-size="8" fill="#fff" font-family="Liberation Sans" text-anchor="middle">Y</text></svg>
  <div class="ul" style="left:419px;top:30px;width:31px"></div>
  <svg class="a" style="left:465px;top:6px" width="24" height="22" viewBox="0 0 24 22"><circle cx="10" cy="10.5" r="9.5" fill="#34a853"/><path d="M10 10.5L1.8 5.75A9.5 9.5 0 0 1 18.2 5.75Z" fill="#ea4335"/><path d="M10 10.5L18.2 5.75A9.5 9.5 0 0 1 10 20Z" fill="#fbbc04"/><circle cx="10" cy="10.5" r="4.3" fill="#fff"/><circle cx="10" cy="10.5" r="3.4" fill="#4285f4"/><circle cx="16" cy="15.5" r="6" fill="#f07a1a"/><text x="16" y="18.5" font-size="8" fill="#fff" font-family="Liberation Sans" text-anchor="middle">la</text></svg>
  <div class="ul" style="left:458px;top:30px;width:31px"></div>
  <svg class="a" style="left:503px;top:6px" width="24" height="22" viewBox="0 0 24 22"><circle cx="10" cy="10.5" r="9.5" fill="#34a853"/><path d="M10 10.5L1.8 5.75A9.5 9.5 0 0 1 18.2 5.75Z" fill="#ea4335"/><path d="M10 10.5L18.2 5.75A9.5 9.5 0 0 1 10 20Z" fill="#fbbc04"/><circle cx="10" cy="10.5" r="4.3" fill="#fff"/><circle cx="10" cy="10.5" r="3.4" fill="#4285f4"/><circle cx="16" cy="15.5" r="6" fill="#8a9aa8"/><text x="16" y="18.5" font-size="8" fill="#fff" font-family="Liberation Sans" text-anchor="middle">E</text></svg>
  <div class="ul" style="left:496px;top:30px;width:31px"></div>
  <svg class="a" style="left:541px;top:6px" width="24" height="22" viewBox="0 0 24 22"><circle cx="10" cy="10.5" r="9.5" fill="#34a853"/><path d="M10 10.5L1.8 5.75A9.5 9.5 0 0 1 18.2 5.75Z" fill="#ea4335"/><path d="M10 10.5L18.2 5.75A9.5 9.5 0 0 1 10 20Z" fill="#fbbc04"/><circle cx="10" cy="10.5" r="4.3" fill="#fff"/><circle cx="10" cy="10.5" r="3.4" fill="#4285f4"/><circle cx="16" cy="15.5" r="6" fill="#6a4a3a"/><text x="16" y="18.5" font-size="8" fill="#fff" font-family="Liberation Sans" text-anchor="middle"></text></svg>
  <div class="ul" style="left:534px;top:30px;width:31px"></div>
  <svg class="a" style="left:579px;top:6px" width="24" height="22" viewBox="0 0 24 22"><circle cx="10" cy="10.5" r="9.5" fill="#34a853"/><path d="M10 10.5L1.8 5.75A9.5 9.5 0 0 1 18.2 5.75Z" fill="#ea4335"/><path d="M10 10.5L18.2 5.75A9.5 9.5 0 0 1 10 20Z" fill="#fbbc04"/><circle cx="10" cy="10.5" r="4.3" fill="#fff"/><circle cx="10" cy="10.5" r="3.4" fill="#4285f4"/><circle cx="16" cy="15.5" r="6" fill="#1aa0c8"/><text x="16" y="18.5" font-size="8" fill="#fff" font-family="Liberation Sans" text-anchor="middle">S</text></svg>
  <div class="ul" style="left:572px;top:30px;width:31px"></div>
  <svg class="a" style="left:618px;top:6px" width="24" height="22" viewBox="0 0 24 22"><circle cx="10" cy="10.5" r="9.5" fill="#34a853"/><path d="M10 10.5L1.8 5.75A9.5 9.5 0 0 1 18.2 5.75Z" fill="#ea4335"/><path d="M10 10.5L18.2 5.75A9.5 9.5 0 0 1 10 20Z" fill="#fbbc04"/><circle cx="10" cy="10.5" r="4.3" fill="#fff"/><circle cx="10" cy="10.5" r="3.4" fill="#4285f4"/><circle cx="16" cy="15.5" r="6" fill="#2d7a2a"/><text x="16" y="18.5" font-size="8" fill="#fff" font-family="Liberation Sans" text-anchor="middle">C</text></svg>
  <div class="ul" style="left:611px;top:30px;width:31px"></div>
  <svg class="a" style="left:656px;top:6px" width="24" height="22" viewBox="0 0 24 22"><circle cx="10" cy="10.5" r="9.5" fill="#34a853"/><path d="M10 10.5L1.8 5.75A9.5 9.5 0 0 1 18.2 5.75Z" fill="#ea4335"/><path d="M10 10.5L18.2 5.75A9.5 9.5 0 0 1 10 20Z" fill="#fbbc04"/><circle cx="10" cy="10.5" r="4.3" fill="#fff"/><circle cx="10" cy="10.5" r="3.4" fill="#4285f4"/><circle cx="16" cy="15.5" r="6" fill="#222"/><text x="16" y="18.5" font-size="8" fill="#fff" font-family="Liberation Sans" text-anchor="middle"></text></svg>
  <div class="ul" style="left:649px;top:30px;width:31px"></div>
  <svg class="a" style="left:695px;top:6px" width="20" height="20" viewBox="0 0 20 20"><circle cx="10" cy="10" r="9.5" fill="#1a3a6a"/><circle cx="10" cy="10" r="7" fill="#fff"/><path d="M4.5 6L7 14L10 8L13 14L15.5 6" stroke="#1a3a6a" stroke-width="2" fill="none"/></svg>
  <div class="ul" style="left:688px;top:30px;width:31px"></div>
  <svg class="a" style="left:733px;top:6px" width="20" height="20" viewBox="0 0 20 20"><circle cx="10" cy="10" r="9.5" fill="#1ed760"/><g stroke="#111" stroke-width="1.6" fill="none" stroke-linecap="round"><path d="M4.5 7.2C8 6 12.5 6.3 15.5 8"/><path d="M5 10.3C8 9.4 11.5 9.7 14.3 11"/><path d="M5.5 13.2C8 12.5 10.8 12.7 13 13.8"/></g></svg>
  <div class="ul" style="left:727px;top:30px;width:31px"></div>
  <!-- tray -->
  <svg class="a" style="left:1202px;top:7px" width="19" height="19" viewBox="0 0 19 19"><g fill="#f0a020"><ellipse cx="10" cy="3" rx="7" ry="2.5"/><ellipse cx="11" cy="7" rx="7" ry="2.5"/><ellipse cx="9" cy="11" rx="7" ry="2.5"/></g><g fill="#e08010"><ellipse cx="10" cy="4" rx="7" ry="1.5"/><ellipse cx="11" cy="8" rx="7" ry="1.5"/><ellipse cx="9" cy="12" rx="7" ry="1.5"/></g><path d="M6 18L9.5 15L13 18" stroke="#3aa83a" stroke-width="2" fill="none"/></svg>
  <div id="usd" class="a" style="left:1227px;top:10px;font-size:11px;color:#222;letter-spacing:-0.729px">USD/VES</div>
  <div id="pct" class="a" style="left:1278px;top:10px;font-size:11px;color:#3a9a3a;letter-spacing:-0.271px">+0,62%</div>
  <svg class="a" style="left:1333px;top:12px" width="10" height="6" viewBox="0 0 10 6"><path d="M0.5 5.5L5 1L9.5 5.5" stroke="#222" stroke-width="1.2" fill="none"/></svg>
  <svg class="a" style="left:1350px;top:9px" width="14" height="13" viewBox="0 0 14 13"><path d="M1 4.5H3.5L7 1.5V11.5L3.5 8.5H1Z" stroke="#222" stroke-width="1.1" fill="none"/><path d="M9 4.5C10 5.5 10 7.5 9 8.5M11 3C12.7 4.8 12.7 8.2 11 10" stroke="#222" stroke-width="1.1" fill="none"/></svg>
  <svg class="a" style="left:1369px;top:9px" width="13" height="13" viewBox="0 0 13 13"><g stroke="#222" stroke-width="1.1" fill="none"><rect x="3" y="1" width="9.5" height="7.5"/><path d="M7.5 8.5V11M5 11.5H10"/><rect x="0.5" y="3" width="3" height="6"/></g></svg>
  <svg class="a" style="left:1388px;top:9px" width="14" height="13" viewBox="0 0 14 13"><path d="M3 9C0.5 9 0.5 5 3 5C3.5 2 8 1.5 9 4.5C11.5 4.5 12 8 10 9Z" stroke="#555" stroke-width="1.1" fill="#ddd"/><circle cx="10" cy="9" r="3.2" fill="#f5d800"/><path d="M10 7.3V9.5M10 10.3V10.8" stroke="#222" stroke-width="0.9"/></svg>
  <div id="tm" class="a" style="left:1409px;top:4px;font-size:10px;color:#222;letter-spacing:-0.576px">03:02 a. m.</div>
  <div id="dt" class="a" style="left:1409px;top:17px;font-size:10px;color:#222;letter-spacing:-0.461px">16/11/2024</div>
  <svg class="a" style="left:1468px;top:8px" width="20" height="18" viewBox="0 0 20 18"><path d="M1 1H15V11H6L3 14V11H1Z" fill="#111"/><g stroke="#fff" stroke-width="1"><path d="M4 4H12M4 6.5H12M4 9H10"/></g><circle cx="14" cy="12" r="5" fill="#eadfd0" stroke="#333" stroke-width="1"/><text x="14" y="15.3" font-size="8.5" font-family="Liberation Sans" text-anchor="middle" fill="#111">6</text></svg>
</div>
</body></html>
